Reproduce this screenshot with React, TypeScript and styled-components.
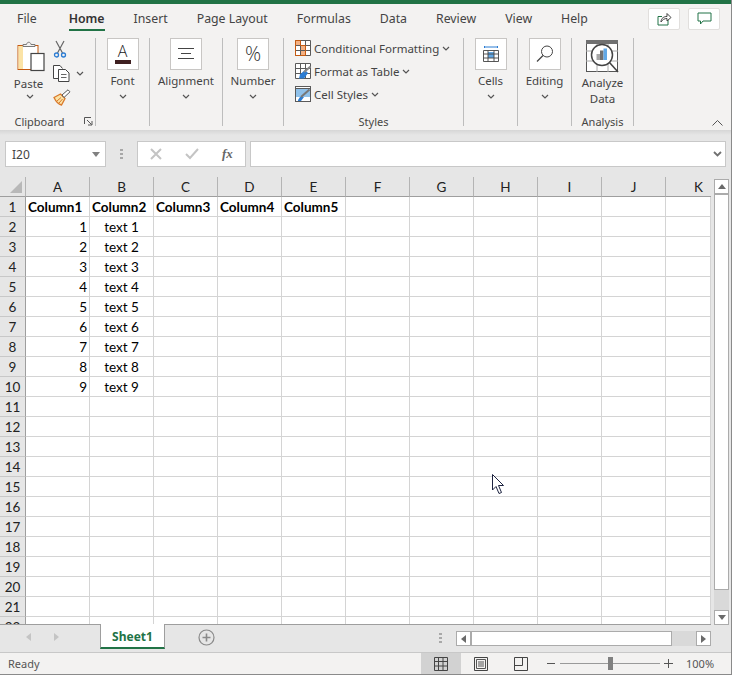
import React from 'react';
import styled, { createGlobalStyle } from 'styled-components';

const GlobalStyle = createGlobalStyle`
    html, body {
        margin: 0;
        padding: 0;
        background: #fff;
    }
    * {
        box-sizing: border-box;
    }
`;

const uiFont = `'Noto Sans', 'Open Sans', sans-serif`;
const cellFont = `Lato, 'Noto Sans', sans-serif`;

const Window = styled.div`
    position: relative;
    width: 732px;
    height: 675px;
    display: flex;
    flex-direction: column;
    background: #f3f2f1;
    border-right: 1px solid #8a8a8a;
    border-bottom: 1px solid #8a8a8a;
    font-family: ${uiFont};
    font-size: 12px;
    color: #444;
    overflow: hidden;
`;

const TitleStrip = styled.div`
    height: 4px;
    flex: none;
    background: #217346;
`;

const TabRow = styled.div`
    height: 28px;
    flex: none;
    display: flex;
    align-items: flex-start;
    padding-left: 17px;
    gap: 29px;
`;

const Tab = styled.div<{ $active?: boolean }>`
    height: 27px;
    padding-top: 5px;
    line-height: 20px;
    font-size: 12.3px;
    white-space: nowrap;
    font-weight: ${({ $active }) => ($active ? 600 : 400)};
    color: ${({ $active }) => ($active ? '#333' : '#444')};
    border-bottom: 2px solid ${({ $active }) => ($active ? '#217346' : 'transparent')};
    &:first-child {
        margin-right: 3px;
    }
`;

const TabActions = styled.div`
    margin-left: auto;
    margin-right: 11px;
    padding-top: 4px;
    display: flex;
    gap: 8px;
`;

const ActionButton = styled.div`
    width: 32px;
    height: 22px;
    display: flex;
    align-items: center;
    justify-content: center;
    background: #fff;
    border: 1px solid #e1dfdd;
    border-radius: 2px;
`;

const Ribbon = styled.div`
    position: relative;
    height: 98px;
    flex: none;
    display: flex;
    padding-top: 6px;
    font-size: 11.5px;
`;

const Group = styled.div<{ $w: number }>`
    width: ${({ $w }) => $w}px;
    height: 88px;
    flex: none;
    display: flex;
    flex-direction: column;
    border-right: 1px solid #bdbdbd;
`;

const GroupBody = styled.div<{ $row?: boolean }>`
    flex: 1;
    min-height: 0;
    display: flex;
    flex-direction: ${({ $row }) => ($row ? 'row' : 'column')};
    align-items: ${({ $row }) => ($row ? 'flex-start' : 'center')};
`;

const GroupLabel = styled.div<{ $inset?: number }>`
    position: relative;
    height: 12px;
    margin-bottom: -2px;
    padding-right: ${({ $inset }) => $inset || 0}px;
    line-height: 12px;
    font-size: 11px;
    text-align: center;
    flex: none;
    color: #484644;
`;

const Launcher = styled.span`
    position: absolute;
    right: 2px;
    top: 1px;
    display: flex;
`;

const BigBox = styled.div`
    width: 32px;
    height: 32px;
    flex: none;
    display: flex;
    flex-direction: column;
    align-items: center;
    justify-content: center;
    background: #fff;
    border: 1px solid #c8c6c4;
`;

const BigLabel = styled.div`
    margin-top: 2px;
    line-height: 18px;
    white-space: nowrap;
`;

const ChevronSlot = styled.div`
    height: 10px;
    margin-top: 1px;
    display: flex;
    align-items: center;
    justify-content: center;
`;

const FontLetter = styled.span`
    font-family: 'Open Sans', sans-serif;
    font-weight: 300;
    font-size: 16px;
    line-height: 15px;
    color: #222;
`;

const FontColourBar = styled.span`
    width: 16px;
    height: 4px;
    margin-top: 1px;
    background: #3f2021;
`;

const PercentGlyph = styled.span`
    font-family: 'Open Sans', sans-serif;
    font-weight: 300;
    font-size: 20px;
    line-height: 20px;
    color: #333;
`;

const PasteColumn = styled.div`
    width: 46px;
    margin-left: 7px;
    padding-top: 3px;
    display: flex;
    flex-direction: column;
    align-items: center;
`;

const PasteLabel = styled.div`
    line-height: 16px;
    margin-top: 4px;
    margin-bottom: -2px;
    margin-left: -3px;
`;

const ClipTools = styled.div`
    width: 34px;
    padding-top: 2px;
    display: flex;
    flex-direction: column;
    gap: 6px;
`;

const ClipTool = styled.div`
    height: 18px;
    display: flex;
    align-items: center;
    gap: 6px;
`;

const StyleList = styled.div`
    padding: 0 0 0 11px;
    display: flex;
    flex-direction: column;
    gap: 5px;
    margin-top: 1px;
`;

const StyleItem = styled.div`
    height: 18px;
    display: flex;
    align-items: center;
    gap: 3px;
    white-space: nowrap;
`;

const AnalyzeBody = styled(GroupBody)`
    padding-top: 2px;
`;

const AnalyzeLabel = styled.div`
    line-height: 16px;
    text-align: center;
    margin-top: 2px;
`;

const CollapseButton = styled.span`
    position: absolute;
    right: 8px;
    bottom: 4px;
    display: flex;
`;

const FormulaBar = styled.div`
    height: 47px;
    flex: none;
    display: flex;
    padding: 11px 5px 0 5px;
    background: linear-gradient(#d6d6d6 0, #e6e6e6 5px);
`;

const FieldBox = styled.div<{ $w?: number }>`
    height: 26px;
    display: flex;
    align-items: center;
    background: #fff;
    border: 1px solid #c8c8c8;
    ${({ $w }) => ($w ? `width: ${$w}px; flex: none;` : 'flex: 1;')}
`;

const NameBox = styled(FieldBox)`
    justify-content: space-between;
    padding: 0 5px 0 6px;
    color: #444;
`;

const FormulaGrip = styled.div`
    width: 31px;
    flex: none;
    display: flex;
    align-items: center;
    justify-content: center;
    height: 26px;
`;

const FormulaButtons = styled(FieldBox)`
    padding-left: 12px;
    gap: 23px;
    margin-right: 4px;
`;

const FxGlyph = styled.span`
    font-family: 'Liberation Serif', serif;
    font-style: italic;
    font-weight: 700;
    font-size: 13px;
    color: #666;
`;

const FormulaInput = styled(FieldBox)`
    justify-content: flex-end;
    padding-right: 3px;
`;

const SheetArea = styled.div`
    height: 448px;
    flex: none;
    display: flex;
    background: #e6e6e6;
`;

const GridPane = styled.div`
    width: 711px;
    flex: none;
    overflow: hidden;
    background: #fff;
    border-bottom: 1px solid #9e9e9e;
`;

const HeaderRow = styled.div`
    height: 20px;
    display: flex;
    background: #e6e6e6;
`;

const Corner = styled.div`
    width: 26px;
    flex: none;
    display: flex;
    align-items: flex-end;
    justify-content: flex-end;
    padding: 0 3px 3px 0;
    border-right: 1px solid #b4b4b4;
    border-bottom: 1px solid #9e9e9e;
`;

const ColHead = styled.div<{ $w: number }>`
    width: ${({ $w }) => $w}px;
    flex: none;
    text-align: center;
    font-family: ${cellFont};
    font-size: 13.5px;
    line-height: 21px;
    color: #222;
    border-right: 1px solid #b4b4b4;
    border-bottom: 1px solid #9e9e9e;
    &:last-child {
        border-right: 0;
        padding-left: 20px;
    }
`;

const Row = styled.div`
    height: 20px;
    display: flex;
`;

const RowHead = styled.div`
    width: 26px;
    flex: none;
    text-align: center;
    background: #e6e6e6;
    font-family: ${cellFont};
    font-size: 13.5px;
    line-height: 21px;
    color: #222;
    border-right: 1px solid #9e9e9e;
    border-bottom: 1px solid #c8c8c8;
`;

const Cell = styled.div<{ $w: number; $align?: string; $bold?: boolean }>`
    width: ${({ $w }) => $w}px;
    flex: none;
    padding: 0 2px;
    font-family: ${cellFont};
    font-size: 13.5px;
    line-height: 21px;
    color: #000;
    white-space: nowrap;
    text-align: ${({ $align }) => $align || 'left'};
    font-weight: ${({ $bold }) => ($bold ? 700 : 400)};
    border-right: 1px solid #d4d4d4;
    border-bottom: 1px solid #d4d4d4;
`;

const VScroll = styled.div`
    width: 15px;
    flex: none;
    margin-left: 3px;
    padding-top: 2px;
    display: flex;
    flex-direction: column;
`;

const ScrollButton = styled.div`
    width: 15px;
    height: 15px;
    flex: none;
    display: flex;
    align-items: center;
    justify-content: center;
    background: #fff;
    border: 1px solid #ababab;
`;

const VThumb = styled.div`
    height: 396px;
    flex: none;
    background: #fff;
    border: 1px solid #ababab;
`;

const VTrack = styled.div`
    flex: 1;
    background: #d9d9d9;
`;

const SheetTabs = styled.div`
    height: 28px;
    flex: none;
    display: flex;
    align-items: flex-start;
    background: #e6e6e6;
    border-bottom: 1px solid #c8c8c8;
`;

const SheetNav = styled.div`
    width: 100px;
    height: 27px;
    flex: none;
    display: flex;
    align-items: center;
    padding: 0 0 3px 26px;
    gap: 23px;
`;

const SheetTab = styled.div`
    width: 65px;
    height: 25px;
    margin-top: -1px;
    flex: none;
    text-align: center;
    background: #fff;
    border-left: 1px solid #9e9e9e;
    border-right: 1px solid #9e9e9e;
    border-bottom: 2px solid #217346;
    font-weight: 700;
    font-size: 12px;
    line-height: 25px;
    color: #217346;
`;

const AddSheet = styled.div`
    margin: 4px 0 0 33px;
    display: flex;
`;

const TabGrip = styled.div`
    margin: 8px 0 0 auto;
    display: flex;
`;

const HScroll = styled.div`
    width: 255px;
    height: 15px;
    margin: 6px 20px 0 14px;
    display: flex;
`;

const HThumb = styled.div`
    width: 201px;
    flex: none;
    background: #fff;
    border: 1px solid #ababab;
`;

const HTrack = styled.div`
    flex: 1;
    background: #d9d9d9;
`;

const StatusBar = styled.div`
    height: 21px;
    flex: none;
    display: flex;
    align-items: center;
    padding-left: 8px;
    font-size: 11px;
    color: #555;
`;

const ViewButton = styled.div<{ $active?: boolean }>`
    width: 40px;
    height: 21px;
    flex: none;
    display: flex;
    align-items: center;
    justify-content: center;
    background: ${({ $active }) => ($active ? '#d2d2d2' : 'transparent')};
    &:first-of-type {
        margin-left: auto;
    }
`;

const ZoomControls = styled.div`
    display: flex;
    align-items: center;
    margin-left: 6px;
`;

const ZoomTrack = styled.div`
    position: relative;
    width: 100px;
    height: 1px;
    margin: 0 4px 0 5px;
    background: #9a9a9a;
`;

const ZoomThumb = styled.span`
    position: absolute;
    left: 48px;
    top: -6px;
    width: 5px;
    height: 13px;
    background: #808080;
`;

const ZoomLevel = styled.div`
    width: 58px;
    padding-left: 13px;
    white-space: nowrap;
`;

const MouseCursor = styled.svg`
    position: absolute;
    left: 491px;
    top: 473px;
`;

const Chevron: React.FC<{ size?: number }> = ({ size = 8 }) => (
    <svg width={size} height={5} viewBox="0 0 8 5">
        <path d="M1 1 L4 4 L7 1" fill="none" stroke="#555" strokeWidth="1.2" />
    </svg>
);

const Tri: React.FC<{ dir: 'up' | 'down' | 'left' | 'right'; fill?: string }> = ({ dir, fill = '#6a6a6a' }) => {
    const points = {
        up: '4,0 8,5 0,5',
        down: '0,0 8,0 4,5',
        left: '5,0 5,8 0,4',
        right: '0,0 5,4 0,8',
    }[dir];
    const horizontal = dir === 'up' || dir === 'down';
    return (
        <svg width={horizontal ? 8 : 5} height={horizontal ? 5 : 8}>
            <polygon points={points} fill={fill} />
        </svg>
    );
};

const PasteIcon = () => (
    <svg width="30" height="31" viewBox="0 0 30 31">
        <rect x="3" y="4.5" width="20" height="24" fill="#fff" stroke="#c55a11" />
        <rect x="3.5" y="5" width="4.5" height="23" fill="#fbe3a6" />
        <path d="M8 5.5 V3.5 H11.5 C12 0.5 15.5 0.5 16 3.5 H20 V5.5 Z" fill="#f3f2f1" stroke="#7a7a7a" />
        <rect x="16" y="12.5" width="13" height="17" fill="#fff" stroke="#444" strokeWidth="1.2" />
    </svg>
);

const CutIcon = () => (
    <svg width="14" height="18" viewBox="0 0 14 18">
        <path d="M3 1 L9.5 13 M11 1 L4.5 13" stroke="#666" strokeWidth="1.2" fill="none" />
        <circle cx="3.5" cy="15" r="2" fill="none" stroke="#2b7cd3" strokeWidth="1.3" />
        <circle cx="10.5" cy="15" r="2" fill="none" stroke="#2b7cd3" strokeWidth="1.3" />
    </svg>
);

const CopyIcon = () => (
    <svg width="17" height="17" viewBox="0 0 17 17">
        <path d="M6 13.5 H0.5 V0.5 H7 L9.5 3.5" fill="#fff" stroke="#444" />
        <path d="M5.5 4.5 H12.5 L16 8 V16.5 H5.5 Z" fill="#fff" stroke="#444" />
        <path d="M8 9.5 H13.5 M8 12.5 H13.5" stroke="#666" />
    </svg>
);

const BrushIcon = () => (
    <svg width="18" height="17" viewBox="0 0 18 17">
        <path d="M1 8.5 L7.5 5 L12 9.5 L8.5 16 Q4 15 1 8.5 Z" fill="#fbe3a6" stroke="#d9792b" strokeWidth="1.3" />
        <path d="M4 12 L8 8.5 M6 14 L9.5 10" stroke="#d9792b" />
        <path d="M9 6 L15 0.8 L17 2.8 L11 8.5 Z" fill="#fff" stroke="#555" />
    </svg>
);

const LauncherIcon = () => (
    <svg width="9" height="9" viewBox="0 0 9 9">
        <path d="M0.5 7 V0.5 H7 M3 3 L7.5 7.5 M8 4 V8 H4" fill="none" stroke="#555" />
    </svg>
);

const AlignIcon = () => (
    <svg width="16" height="14" viewBox="0 0 16 14">
        <path d="M0 1.5 H16 M3 6.5 H13 M0 11.5 H16" stroke="#444" strokeWidth="1" />
    </svg>
);

const GRID_LINES = 'M0.5 0.5 H15.5 V15.5 H0.5 Z M0.5 5.5 H15.5 M0.5 10.5 H15.5 M5.5 0.5 V15.5 M10.5 0.5 V15.5';

const CondFormatIcon = () => (
    <svg width="16" height="16" viewBox="0 0 16 16">
        <rect x="1" y="1" width="14" height="14" fill="#fff" />
        <rect x="1" y="1" width="4.5" height="4.5" fill="#f4b183" />
        <rect x="5.5" y="5.5" width="5" height="5" fill="#f4b183" />
        <rect x="5.5" y="10.5" width="5" height="4.5" fill="#f4b183" />
        <path d={GRID_LINES} fill="none" stroke="#5a5a5a" />
        <path d="M0.5 0.5 V15.5 H10.5 V5.5 H5.5 V0.5 H0.5" fill="none" stroke="#c55a11" />
    </svg>
);

const TableBrushIcon = () => (
    <svg width="16" height="16" viewBox="0 0 16 16">
        <rect x="0.5" y="0.5" width="15" height="15" fill="#fff" />
        <path d={GRID_LINES} fill="none" stroke="#5a5a5a" />
        <path d="M5 11.5 L10 7 L13 10 L9 15.5 H4 Z" fill="#2b7cd3" />
        <path d="M9 9 L15.5 3.5" stroke="#888" strokeWidth="2" />
    </svg>
);

const CellStyleIcon = () => (
    <svg width="16" height="16" viewBox="0 0 16 16">
        <rect x="0.5" y="0.5" width="15" height="15" fill="#fff" stroke="#5a5a5a" />
        <rect x="1" y="3" width="14" height="8" fill="#8fc1ea" />
        <path d="M0.5 2.5 H15.5" stroke="#5a5a5a" />
        <path d="M3 14 L5 11 H9 L6 15 H3 Z" fill="#2b7cd3" />
        <path d="M6 11 L14.5 3.5" stroke="#777" strokeWidth="2" />
    </svg>
);

const CellsIcon = () => (
    <svg width="16" height="16" viewBox="0 0 16 16">
        <path d="M1.5 1 H14.5 M1.5 0 V2 M14.5 0 V2" stroke="#2b7cd3" fill="none" />
        <rect x="5" y="6" width="6" height="6" fill="#62a8e5" />
        <path d="M0.5 4.5 H15.5 V15.5 H0.5 Z M0.5 8 H15.5 M0.5 12 H15.5 M5 4.5 V15.5 M11 4.5 V15.5" fill="none" stroke="#444" strokeWidth="0.9" />
    </svg>
);

const SearchIcon = () => (
    <svg width="18" height="18" viewBox="0 0 18 18">
        <circle cx="11" cy="6.5" r="5.5" fill="none" stroke="#444" />
        <path d="M7 10.5 L1 16.5" stroke="#444" strokeWidth="1.2" />
    </svg>
);

const AnalyzeIcon = () => (
    <svg width="33" height="33" viewBox="0 0 33 33">
        <rect x="0.5" y="0.5" width="31" height="31" fill="#fff" stroke="#555" />
        <rect x="0" y="0" width="32" height="4" fill="#707070" />
        <path d="M0 11 H32 M0 21 H32 M11 4 V32 M22 4 V32" stroke="#aaa" />
        <circle cx="16" cy="15" r="10.5" fill="#fff" stroke="#444" strokeWidth="1.5" />
        <rect x="10.5" y="14" width="3.5" height="6" fill="#a6a6a6" />
        <rect x="14" y="10.5" width="3.5" height="9.5" fill="#707070" />
        <rect x="17.5" y="8.5" width="3.5" height="11.5" fill="#62a8e5" />
        <path d="M23.5 22.5 L32 32" stroke="#444" strokeWidth="1.6" />
    </svg>
);

const ShareIcon = () => (
    <svg width="15" height="14" viewBox="0 0 15 14">
        <path d="M5 4.5 H1 V13 H11 V8" fill="none" stroke="#217346" />
        <path d="M4 10 C4 6 7 4.5 10 4.5 V1.5 L14 5.5 L10 9 V6.5 C7.5 6.5 5.5 7.5 4 10 Z" fill="none" stroke="#444" />
    </svg>
);

const CommentIcon = () => (
    <svg width="15" height="14" viewBox="0 0 15 14">
        <path d="M1 1 H14 V9 H6 L3.5 12 V9 H1 Z" fill="none" stroke="#217346" />
    </svg>
);

const CrossIcon = () => (
    <svg width="12" height="12">
        <path d="M1 1 L11 11 M11 1 L1 11" stroke="#c4c4c4" strokeWidth="2" />
    </svg>
);

const CheckIcon = () => (
    <svg width="14" height="12">
        <path d="M1 6 L5 10 L13 1" fill="none" stroke="#c4c4c4" strokeWidth="2" />
    </svg>
);

const Dots = () => (
    <svg width="3" height="11">
        <path d="M0 0 H3 V2 H0 Z M0 4 H3 V6 H0 Z M0 8 H3 V10 H0 Z" fill="#a8a8a8" />
    </svg>
);

const AddIcon = () => (
    <svg width="17" height="17" viewBox="0 0 17 17">
        <circle cx="8.5" cy="8.5" r="7.5" fill="none" stroke="#8a8a8a" strokeWidth="1.2" />
        <path d="M8.5 4.5 V12.5 M4.5 8.5 H12.5" stroke="#8a8a8a" strokeWidth="1.6" />
    </svg>
);

const NormalViewIcon = () => (
    <svg width="14" height="14">
        <path d="M0.5 0.5 H13.5 V13.5 H0.5 Z M0.5 4.5 H13.5 M0.5 9 H13.5 M4.5 0.5 V13.5 M9 0.5 V13.5" fill="none" stroke="#444" />
    </svg>
);

const PageLayoutIcon = () => (
    <svg width="14" height="14">
        <path d="M0.5 0.5 H13.5 V13.5 H0.5 Z" fill="none" stroke="#444" />
        <path d="M2.5 2.5 H11.5 V11.5 H2.5 Z M4 5 H10 M4 7 H10 M4 9 H10" fill="none" stroke="#555" />
    </svg>
);

const PageBreakIcon = () => (
    <svg width="14" height="14">
        <path d="M0.5 0.5 H13.5 V13.5 H0.5 Z M0.5 8.5 H8.5 V0.5" fill="none" stroke="#444" />
    </svg>
);

const ZoomMinus = () => (
    <svg width="8" height="9">
        <path d="M0 4.5 H8" stroke="#555" />
    </svg>
);

const ZoomPlus = () => (
    <svg width="9" height="9">
        <path d="M0 4.5 H9 M4.5 0 V9" stroke="#555" />
    </svg>
);

const tabs = ['File', 'Home', 'Insert', 'Page Layout', 'Formulas', 'Data', 'Review', 'View', 'Help'];
const columns = ['A', 'B', 'C', 'D', 'E', 'F', 'G', 'H', 'I', 'J', 'K'];
const columnHeaders = ['Column1', 'Column2', 'Column3', 'Column4', 'Column5'];
const rowNumbers = Array.from({ length: 22 }, (_, i) => i + 1);
const widthOf = (i: number) => (i === 10 ? 45 : 64);

const App: React.FC = () => {
    return (
        <Window>
            <GlobalStyle />
            <TitleStrip />
            <TabRow>
                {tabs.map(tab => (
                    <Tab key={tab} $active={tab === 'Home'}>{tab}</Tab>
                ))}
                <TabActions>
                    <ActionButton><ShareIcon /></ActionButton>
                    <ActionButton><CommentIcon /></ActionButton>
                </TabActions>
            </TabRow>

            <Ribbon>
                <Group $w={96}>
                    <GroupBody $row>
                        <PasteColumn>
                            <PasteIcon />
                            <PasteLabel>Paste</PasteLabel>
                            <ChevronSlot><Chevron /></ChevronSlot>
                        </PasteColumn>
                        <ClipTools>
                            <ClipTool><CutIcon /></ClipTool>
                            <ClipTool><CopyIcon /><Chevron /></ClipTool>
                            <ClipTool><BrushIcon /></ClipTool>
                        </ClipTools>
                    </GroupBody>
                    <GroupLabel $inset={16}>
                        Clipboard
                        <Launcher><LauncherIcon /></Launcher>
                    </GroupLabel>
                </Group>

                <Group $w={54}>
                    <GroupBody>
                        <BigBox>
                            <FontLetter>A</FontLetter>
                            <FontColourBar />
                        </BigBox>
                        <BigLabel>Font</BigLabel>
                        <ChevronSlot><Chevron /></ChevronSlot>
                    </GroupBody>
                </Group>

                <Group $w={73}>
                    <GroupBody>
                        <BigBox><AlignIcon /></BigBox>
                        <BigLabel>Alignment</BigLabel>
                        <ChevronSlot><Chevron /></ChevronSlot>
                    </GroupBody>
                </Group>

                <Group $w={61}>
                    <GroupBody>
                        <BigBox><PercentGlyph>%</PercentGlyph></BigBox>
                        <BigLabel>Number</BigLabel>
                        <ChevronSlot><Chevron /></ChevronSlot>
                    </GroupBody>
                </Group>

                <Group $w={180}>
                    <GroupBody $row>
                        <StyleList>
                            <StyleItem><CondFormatIcon />Conditional Formatting <Chevron /></StyleItem>
                            <StyleItem><TableBrushIcon />Format as Table <Chevron /></StyleItem>
                            <StyleItem><CellStyleIcon />Cell Styles <Chevron /></StyleItem>
                        </StyleList>
                    </GroupBody>
                    <GroupLabel>Styles</GroupLabel>
                </Group>

                <Group $w={54}>
                    <GroupBody>
                        <BigBox><CellsIcon /></BigBox>
                        <BigLabel>Cells</BigLabel>
                        <ChevronSlot><Chevron /></ChevronSlot>
                    </GroupBody>
                </Group>

                <Group $w={54}>
                    <GroupBody>
                        <BigBox><SearchIcon /></BigBox>
                        <BigLabel>Editing</BigLabel>
                        <ChevronSlot><Chevron /></ChevronSlot>
                    </GroupBody>
                </Group>

                <Group $w={62}>
                    <AnalyzeBody>
                        <AnalyzeIcon />
                        <AnalyzeLabel>Analyze<br />Data</AnalyzeLabel>
                    </AnalyzeBody>
                    <GroupLabel>Analysis</GroupLabel>
                </Group>

                <CollapseButton>
                    <svg width="11" height="6" viewBox="0 0 11 6">
                        <path d="M0.5 5.5 L5.5 0.5 L10.5 5.5" fill="none" stroke="#555" />
                    </svg>
                </CollapseButton>
            </Ribbon>

            <FormulaBar>
                <NameBox $w={101}>I20<Tri dir="down" fill="#808080" /></NameBox>
                <FormulaGrip><Dots /></FormulaGrip>
                <FormulaButtons $w={109}>
                    <CrossIcon />
                    <CheckIcon />
                    <FxGlyph>fx</FxGlyph>
                </FormulaButtons>
                <FormulaInput>
                    <svg width="9" height="6">
                        <path d="M1 1 L4.5 4.5 L8 1" fill="none" stroke="#707070" strokeWidth="1.8" />
                    </svg>
                </FormulaInput>
            </FormulaBar>

            <SheetArea>
                <GridPane>
                    <HeaderRow>
                        <Corner>
                            <svg width="12" height="12">
                                <polygon points="12,0 12,12 0,12" fill="#b8b8b8" />
                            </svg>
                        </Corner>
                        {columns.map((col, i) => (
                            <ColHead key={col} $w={widthOf(i)}>{col}</ColHead>
                        ))}
                    </HeaderRow>
                    {rowNumbers.map(row => (
                        <Row key={row}>
                            <RowHead>{row}</RowHead>
                            {columns.map((col, i) => {
                                let text = '';
                                let align = 'left';
                                if (row === 1 && i < columnHeaders.length) {
                                    text = columnHeaders[i];
                                } else if (row > 1 && row <= 10 && i === 0) {
                                    text = String(row - 1);
                                    align = 'right';
                                } else if (row > 1 && row <= 10 && i === 1) {
                                    text = `text ${row - 1}`;
                                    align = 'center';
                                }
                                return (
                                    <Cell key={col} $w={widthOf(i)} $align={align} $bold={row === 1}>
                                        {text}
                                    </Cell>
                                );
                            })}
                        </Row>
                    ))}
                </GridPane>
                <VScroll>
                    <ScrollButton><Tri dir="up" /></ScrollButton>
                    <VThumb />
                    <VTrack />
                    <ScrollButton><Tri dir="down" /></ScrollButton>
                </VScroll>
            </SheetArea>

            <SheetTabs>
                <SheetNav>
                    <Tri dir="left" fill="#c4c4c4" />
                    <Tri dir="right" fill="#c4c4c4" />
                </SheetNav>
                <SheetTab>Sheet1</SheetTab>
                <AddSheet><AddIcon /></AddSheet>
                <TabGrip><Dots /></TabGrip>
                <HScroll>
                    <ScrollButton><Tri dir="left" /></ScrollButton>
                    <HThumb />
                    <HTrack />
                    <ScrollButton><Tri dir="right" /></ScrollButton>
                </HScroll>
            </SheetTabs>

            <StatusBar>
                Ready
                <ViewButton $active><NormalViewIcon /></ViewButton>
                <ViewButton><PageLayoutIcon /></ViewButton>
                <ViewButton><PageBreakIcon /></ViewButton>
                <ZoomControls>
                    <ZoomMinus />
                    <ZoomTrack><ZoomThumb /></ZoomTrack>
                    <ZoomPlus />
                    <ZoomLevel>100%</ZoomLevel>
                </ZoomControls>
            </StatusBar>

            <MouseCursor width="14" height="22" viewBox="0 0 14 22">
                <path d="M1.5 1.5 V17 L5 13.5 L8 20.5 L10.5 19.5 L7.5 12.5 H12.5 Z" fill="#fff" stroke="#1d2340" strokeWidth="1" />
            </MouseCursor>
        </Window>
    );
};

export default App;
